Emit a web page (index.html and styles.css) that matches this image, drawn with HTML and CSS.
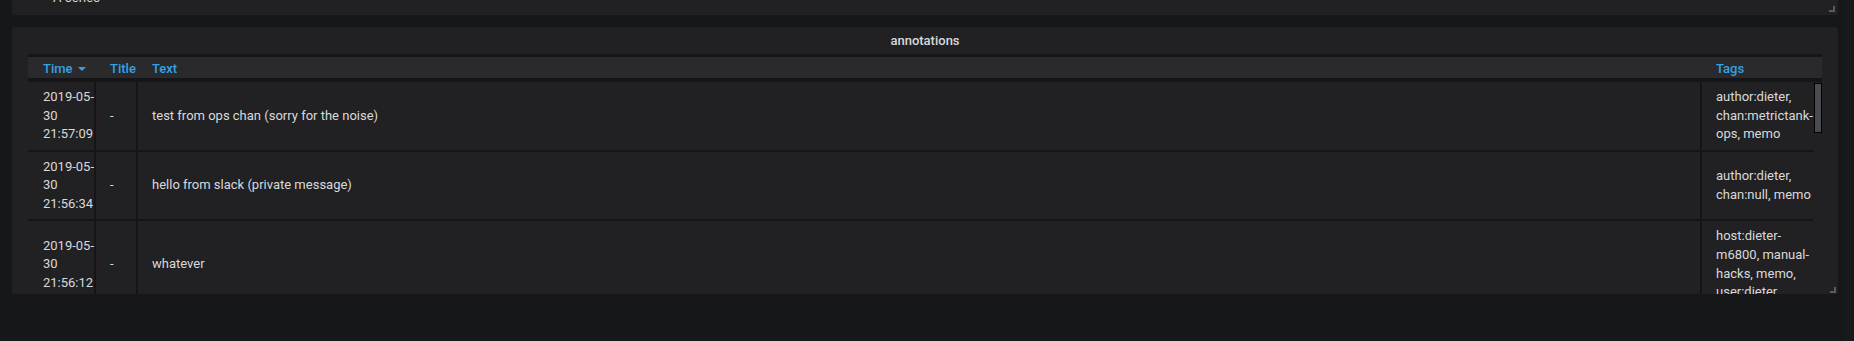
FILE: index.html
```html
<!DOCTYPE html>
<html lang="en">
<head>
  <meta charset="UTF-8">
  <title>annotations</title>
  <link rel="stylesheet" href="styles.css">
</head>
<body>
  <div class="page">
    <div class="dashboard">

      <!-- panel above, mostly scrolled out of view -->
      <div class="panel panel-top">
        <div class="legend-item">A-series</div>
        <span class="resize-handle"></span>
      </div>

      <!-- annotations table panel -->
      <div class="panel panel-table">
        <div class="panel-title">annotations</div>
        <div class="table">
          <div class="thead">
            <div class="th">Time<span class="caret"></span></div>
            <div class="th">Title</div>
            <div class="th">Text</div>
            <div class="th">Tags</div>
          </div>
          <div class="tbody">
            <div class="rows">
              <div class="tr">
                <div class="td td-time"><span>2019-05-30 21:57:09</span></div>
                <div class="td"><span>-</span></div>
                <div class="td"><span>test from ops chan (sorry for the noise)</span></div>
                <div class="td"><span>author:dieter, chan:metrictank-ops, memo</span></div>
              </div>
              <div class="tr">
                <div class="td td-time"><span>2019-05-30 21:56:34</span></div>
                <div class="td"><span>-</span></div>
                <div class="td"><span>hello from slack (private message)</span></div>
                <div class="td"><span>author:dieter, chan:null, memo</span></div>
              </div>
              <div class="tr">
                <div class="td td-time"><span>2019-05-30 21:56:12</span></div>
                <div class="td"><span>-</span></div>
                <div class="td"><span>whatever</span></div>
                <div class="td"><span>host:dieter-m6800, manual-hacks, memo, user:dieter</span></div>
              </div>
            </div>
            <div class="scroll-track">
              <div class="scroll-thumb"></div>
            </div>
          </div>
        </div>
        <span class="resize-handle"></span>
      </div>

    </div>
    <div class="page-scroll"></div>
  </div>
</body>
</html>
```

FILE: styles.css
```css
* {
  box-sizing: border-box;
}

body {
  margin: 0;
  height: 341px;
  overflow: hidden;
  background-color: #161719;
  font-family: Roboto, "Helvetica Neue", Arial, sans-serif;
  font-size: 13px;
  color: #d8d9da;
}

.page {
  display: flex;
  height: 341px;
}

.dashboard {
  flex: 1;
  display: flex;
  flex-direction: column;
  gap: 12px;
  padding: 0 7px 0 12px;
}

.page-scroll {
  width: 9px;
  background-color: #18191b;
}

.panel {
  position: relative;
  background-color: #212124;
  border-radius: 3px;
  overflow: hidden;
}

.panel-top {
  height: 40px;
  margin-top: -25px;
  padding: 13px 0 0 41px;
}

.legend-item {
  line-height: 19px;
}

.resize-handle {
  position: absolute;
  right: 2px;
  bottom: 1px;
  width: 6px;
  height: 6px;
  border-right: 2px solid #5b5b5e;
  border-bottom: 2px solid #5b5b5e;
}

.panel-top .resize-handle {
  right: 3px;
  bottom: 3px;
}

.panel-table {
  height: 267px;
}

.panel-title {
  height: 27px;
  line-height: 27px;
  text-align: center;
  font-weight: 500;
}

.table {
  padding: 0 16px;
}

.thead,
.tr {
  display: grid;
  grid-template-columns: 66px 40px 1fr 111px;
  column-gap: 2px;
}

.thead {
  height: 28px;
  padding-right: 9px;
  background-color: #2a2a2d;
  border-top: 3px solid #151517;
  border-bottom: 4px solid #151517;
}

.th {
  display: flex;
  align-items: center;
  padding: 2px 0 0 14px;
  color: #33a2e5;
  font-weight: 500;
  white-space: nowrap;
}

.th:first-child {
  padding-left: 15px;
}

.caret {
  margin-left: 5px;
  margin-top: 1px;
  border-left: 4px solid transparent;
  border-right: 4px solid transparent;
  border-top: 4px solid #33a2e5;
}

.tbody {
  display: flex;
}

.rows {
  flex: 1;
  display: flex;
  flex-direction: column;
  gap: 2px;
  background-color: #151517;
}

.tr {
  background-color: #151517;
}

.td {
  display: flex;
  flex-direction: column;
  justify-content: center;
  padding: 6px 0 6px 14px;
  line-height: 1.428571;
  background-color: #212124;
}

.td-time {
  padding-left: 15px;
}

/* the date runs right up to the column edge */
.td-time span {
  margin-right: -6px;
}

.scroll-track {
  width: 9px;
  padding: 1px 0 0 1px;
}

.scroll-thumb {
  height: 50px;
  background-color: #4a4a52;
  border: 1px solid #000;
}
```
